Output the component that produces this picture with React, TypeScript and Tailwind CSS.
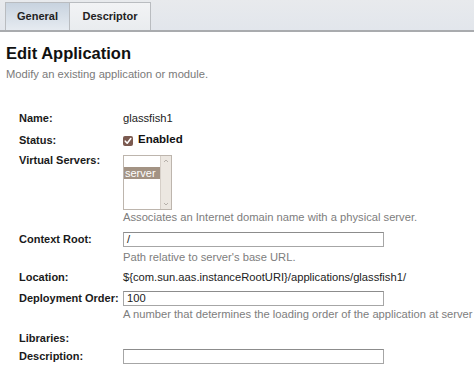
import React from 'react';

const font = { fontFamily: '"Liberation Sans", Arial, sans-serif' };

const Label: React.FC<{ children: React.ReactNode; lh?: string }> = ({ children, lh = 'leading-[14px]' }) => (
    <div className={`w-[104px] shrink-0 font-bold text-[11px] text-[#1a1a1a] ${lh}`}>{children}</div>
);

const Help: React.FC<{ children: React.ReactNode; className?: string }> = ({ children, className = '' }) => (
    <div className={`pl-[104px] text-[11.2px] leading-[14px] text-[#7d7d7d] whitespace-nowrap ${className}`}>{children}</div>
);

const TextBox: React.FC<{ value?: string }> = ({ value = '' }) => (
    <div className="w-[261px] h-[15px] border border-[#a6a6a6] border-t-[#8c8c8c] bg-white text-[11.2px] leading-[13px] pl-[3px] text-[#222]">
        {value}
    </div>
);

const App: React.FC = () => {
    return (
        <div className="w-[474px] h-[370px] bg-white overflow-hidden" style={font}>
            {/* Tabs */}
            <div className="h-[32px] bg-gradient-to-b from-[#e8eaed] to-[#e2e6ec] border-b-2 border-[#a9abae] flex items-end pl-[5px]">
                <div className="w-[65px] h-[28px] border border-b-0 border-[#b9bcc0] bg-gradient-to-b from-[#c8d3df] to-[#e6ebf1] flex items-center justify-center text-[11px] font-bold text-[#222]">
                    General
                </div>
                <div className="w-[81px] h-[28px] border border-l-0 border-b-0 border-[#b9bcc0] bg-gradient-to-b from-[#f2f3f5] to-[#e9ecef] flex items-center justify-center text-[11px] font-bold text-[#222]">
                    Descriptor
                </div>
            </div>

            {/* Title */}
            <div className="pl-[6px]">
                <h1 className="mt-[11px] text-[16.5px] leading-[20px] font-bold text-[#111]">Edit Application</h1>
                <p className="mt-[4px] text-[11.2px] leading-[14px] text-[#7a7a7a]">Modify an existing application or module.</p>
            </div>

            {/* Properties */}
            <div className="pl-[19px] text-[11.2px] text-[#222]">
                <div className="mt-[30px] flex">
                    <Label>Name:</Label>
                    <div className="leading-[14px]">glassfish1</div>
                </div>
                <div className="mt-[8px] flex">
                    <Label>Status:</Label>
                    <div className="flex items-center h-[14px] gap-[5px]">
                        <span className="w-[10px] h-[10px] mt-[1px] rounded-[2px] bg-[#7b5a50] flex items-center justify-center">
                            <svg width="8" height="8" viewBox="0 0 8 8">
                                <path d="M1.3 4.2 L3.2 6.2 L6.8 1.6" fill="none" stroke="#fff" strokeWidth="1.6" strokeLinecap="round" strokeLinejoin="round" />
                            </svg>
                        </span>
                        <span className="font-bold text-[11.5px] text-[#111]">Enabled</span>
                    </div>
                </div>
                <div className="mt-[6px] flex">
                    <Label>Virtual Servers:</Label>
                    <div className="pt-[2px]">
                        <div className="w-[49px] h-[55px] border border-[#bdb5ad] flex bg-white">
                            <div className="flex-1 pt-[11px]">
                                <div className="bg-[#a39384] text-white text-[11px] leading-[12px] pl-[1px]">server</div>
                            </div>
                            <div className="w-[11px] bg-[#ece7e1] border-l border-[#d6cfc8] flex flex-col items-center justify-between py-[3px]">
                                <svg width="6" height="4" viewBox="0 0 6 4"><path d="M1 3 L3 1 L5 3" fill="none" stroke="#a8a29c" strokeWidth="0.8" /></svg>
                                <svg width="6" height="4" viewBox="0 0 6 4"><path d="M1 1 L3 3 L5 1" fill="none" stroke="#a8a29c" strokeWidth="0.8" /></svg>
                            </div>
                        </div>
                    </div>
                </div>
                <Help>Associates an Internet domain name with a physical server.</Help>

                <div className="mt-[8px] flex">
                    <Label lh="leading-[15px]">Context Root:</Label>
                    <TextBox value="/" />
                </div>
                <Help className="mt-[3px]">Path relative to server's base URL.</Help>

                <div className="mt-[6px] flex">
                    <Label>Location:</Label>
                    <div className="leading-[14px] whitespace-nowrap">${'{'}com.sun.aas.instanceRootURI{'}'}/applications/glassfish1/</div>
                </div>

                <div className="mt-[7px] flex">
                    <Label lh="leading-[15px]">Deployment Order:</Label>
                    <TextBox value="100" />
                </div>
                <Help className="mt-[1px]">A number that determines the loading order of the application at server</Help>

                <div className="mt-[10px] flex">
                    <Label>Libraries:</Label>
                </div>

                <div className="mt-[4px] flex">
                    <Label lh="leading-[15px]">Description:</Label>
                    <TextBox />
                </div>
            </div>
        </div>
    );
};

export default App;
